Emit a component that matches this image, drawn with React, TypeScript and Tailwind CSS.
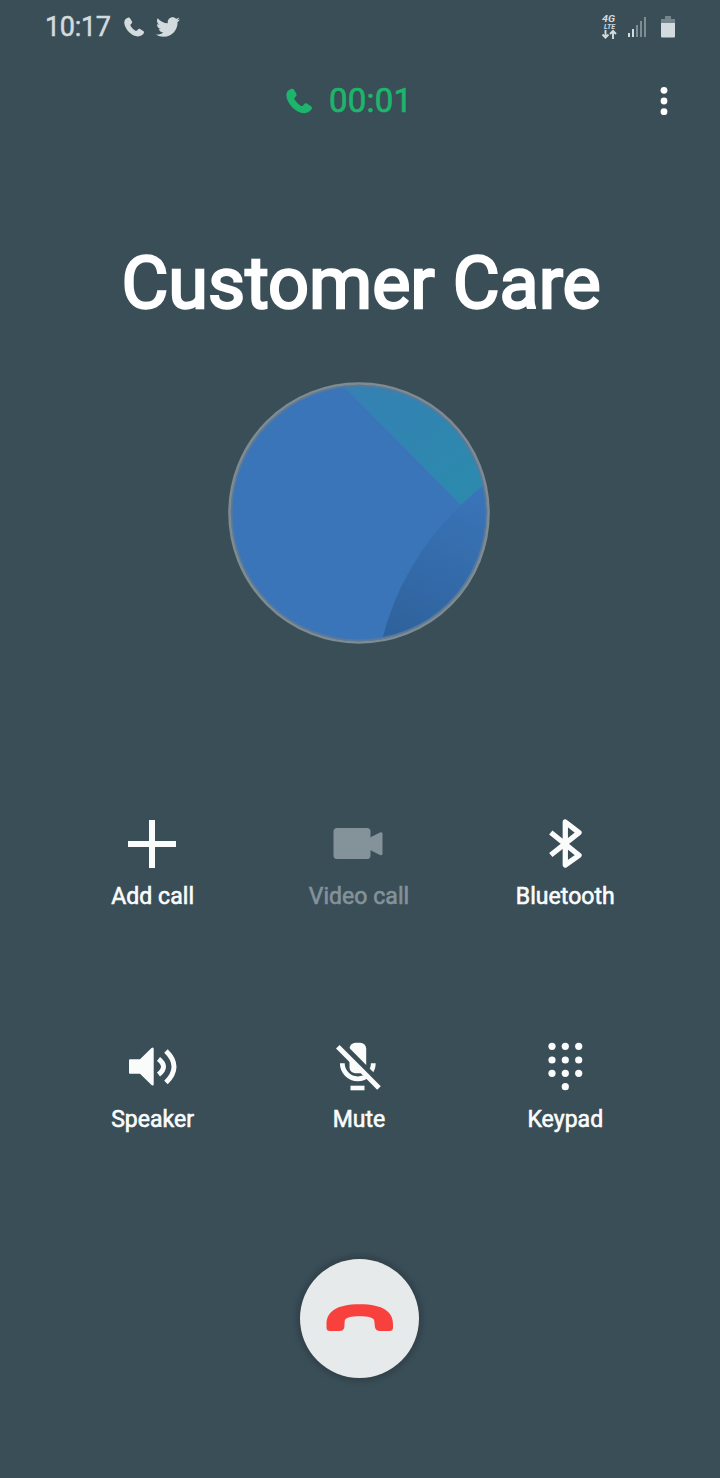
import type { ReactNode } from 'react';
import { FaTwitter } from 'react-icons/fa';

function Handset({ className }: { className?: string }) {
  return (
    <svg viewBox="0 0 26 26" fill="currentColor" className={className}>
      <path d="M5 1C2 2 .3 4 .3 7.5C1 16 10 25 18 25.3C22 25 25 22.5 25.7 21C26.2 20 26 19 25 18.3L21.3 15.8C20 15 18.8 15.2 18 16.2L17 17.5C16.3 18.2 15.3 18.2 14.3 17.5C12 16 10 13.8 8.7 11.7C8.2 10.7 8.3 9.8 9 9.2L10 8.3C10.8 7.5 10.8 6.5 10.2 5.5L8 1.8C7.3.6 6.2.4 5 1Z" />
    </svg>
  );
}

function StatusBar() {
  return (
    <div className="flex h-[54px] items-center pl-[45px] pr-[44px] text-[#d3dbde]">
      <span className="w-[66px] whitespace-nowrap text-[27px] leading-none tracking-[-0.3px] [-webkit-text-stroke:0.5px_currentColor]">10:17</span>
      <Handset className="ml-[13px] h-5 w-5" />
      <FaTwitter className="ml-3 h-6 w-6" />
      <div className="ml-auto flex items-center">
        {/* network type */}
        <svg width="18" height="26" viewBox="0 0 18 26" fill="currentColor" className="mr-[9px]">
          <text x="1" y="8" fontSize="9" fontWeight="700" fontStyle="italic" textLength="13" lengthAdjust="spacingAndGlyphs">4G</text>
          <text x="3" y="15" fontSize="6.5" fontWeight="700" fontStyle="italic" textLength="11" lengthAdjust="spacingAndGlyphs">LTE</text>
          <path d="M4.500 16v7M1.500 20.500l3 3.200 3-3.200M12 25v-7.500M9 20l3-3.200 3 3.200" fill="none" stroke="currentColor" strokeWidth="1.900" />
        </svg>
        <svg width="20" height="22" viewBox="0 0 20 22" fill="currentColor" className="mr-[12px]">
          <path d="M0 17h2v4H0zM4 13h2v8H4z" />
          <path d="M8 9h2v12H8zM12 5h2v16h-2zM16 1h2v20h-2z" opacity=".45" />
        </svg>
        <svg width="16" height="22" viewBox="0 0 16 22" fill="currentColor">
          <path d="M5 0h6v3h4v4H1V3h4z" opacity=".4" />
          <path d="M1 7h14v13.5a1 1 0 0 1-1 1H2a1 1 0 0 1-1-1z" />
        </svg>
      </div>
    </div>
  );
}

function Avatar() {
  return (
    <svg width="262" height="262" viewBox="0 0 262 262">
      <defs>
        <clipPath id="face"><circle cx="131" cy="131" r="128" /></clipPath>
        <linearGradient id="teal" x1="0" y1="0" x2="1" y2="1">
          <stop offset="0" stopColor="#3580b4" />
          <stop offset="1" stopColor="#2b8bac" />
        </linearGradient>
        <linearGradient id="navy" x1=".6" y1="0" x2=".3" y2="1">
          <stop offset="0" stopColor="#3a74b8" />
          <stop offset="1" stopColor="#2e629c" />
        </linearGradient>
      </defs>
      <g clipPath="url(#face)">
        <path d="M0 0h262v262H0z" fill="#3a75b9" />
        <path d="M111 0L233 123L262 99V0z" fill="url(#teal)" />
        <path d="M262 99Q246 110 233 123Q172 182 153 262H262z" fill="url(#navy)" />
      </g>
      <circle cx="131" cy="131" r="127.5" fill="none" stroke="#57799d" strokeWidth="2" />
      <circle cx="131" cy="131" r="129.5" fill="none" stroke="#7d8b92" strokeWidth="2.6" />
    </svg>
  );
}

function Action({ label, disabled, children }: { label: string; disabled?: boolean; children: ReactNode }) {
  return (
    <button
      disabled={disabled}
      className={`flex h-[223px] flex-col items-center ${disabled ? 'text-[#84929a]' : 'text-[#fafcfc]'}`}
    >
      <svg width="60" height="60" viewBox="0 0 60 60" fill="currentColor">{children}</svg>
      <span className="mt-[10px] pl-px text-[23px] leading-[26px] tracking-[0.05px] [-webkit-text-stroke:0.6px_currentColor]">{label}</span>
    </button>
  );
}

const keypadDots = [
  [17, 9.3], [30.3, 9.3], [43.7, 9.3],
  [17, 23], [30.3, 23], [43.7, 23],
  [17, 36.3], [30.3, 36.3], [43.7, 36.3],
  [30.3, 49.7],
];

export default function App() {
  return (
    <div className="h-[1478px] w-[720px] overflow-hidden bg-[#3a4e58] font-[Roboto,sans-serif]">
      <StatusBar />

      <header className="flex h-[94px] items-center pl-[286px] pr-[48px] text-[#1db56c]">
        <Handset className="h-[26px] w-[26px]" />
        <span className="mb-[2px] ml-[17px] text-[33px] leading-none tracking-[0.2px] [-webkit-text-stroke:0.7px_currentColor]">00:01</span>
        <button className="ml-auto text-white">
          <svg width="16" height="32" viewBox="0 0 16 32" fill="currentColor">
            <circle cx="8" cy="5.3" r="3.4" />
            <circle cx="8" cy="16" r="3.4" />
            <circle cx="8" cy="26.7" r="3.4" />
          </svg>
        </button>
      </header>

      <h1 className="mt-[93px] h-[86px] whitespace-nowrap pl-[2px] text-center text-[72px] leading-[86px] text-white [-webkit-text-stroke:2.4px_currentColor]">
        Customer Care
      </h1>

      <div className="mt-[55px] flex pl-[228px]">
        <Avatar />
      </div>

      <div className="ml-[49px] mt-[170px] grid w-[619px] grid-cols-3">
        <Action label="Add call">
          <path d="M27 6h6v21h21v6H33v21h-6V33H6v-6h21z" />
        </Action>
        <Action label="Video call" disabled>
          <rect x="5.5" y="14" width="37" height="31" rx="3.5" />
          <path d="M41 24L52 18.5Q54.5 17.500 54.500 20V39.500Q54.500 42 52 41L41 35.500z" />
        </Action>
        <Action label="Bluetooth">
          <path
            d="M15.800 18.500L44 41.300L30.300 51V8L44 18.700L15.800 41"
            fill="none"
            stroke="currentColor"
            strokeWidth="5.300"
            strokeLinejoin="round"
          />
        </Action>
        <Action label="Speaker">
          <path d="M8 22.300H18L29.500 11Q31.700 9.500 31.700 12V47Q31.700 49.500 29.500 48L18 36.700H8Q7 36.700 7 35.700V23.300Q7 22.300 8 22.300z" />
          <path d="M36.500 22Q46.500 29.700 36.500 37.500M44 14Q60 29.700 44 45.500" fill="none" stroke="currentColor" strokeWidth="5" />
        </Action>
        <Action label="Mute">
          <rect x="21.500" y="5.700" width="16.700" height="30.600" rx="6" />
          <path d="M14.300 26.300a15.500 15.500 0 0 0 31 0" fill="none" stroke="currentColor" strokeWidth="4.800" />
          <path d="M22.500 48.700h14v4.600h-14z" />
          <path d="M12 5.500L54 48" fill="none" stroke="#3a4e58" strokeWidth="5.500" />
          <path d="M9.800 9.700L51 51" fill="none" stroke="currentColor" strokeWidth="5" />
        </Action>
        <Action label="Keypad">
          {keypadDots.map(([x, y]) => <circle key={`${x}-${y}`} cx={x} cy={y} r="3.6" />)}
        </Action>
      </div>

      <button className="ml-[300px] mt-[-1px] block h-[119px] w-[119px] rounded-full bg-[#e6eaeb] shadow-[0_0_4px_4px_#32434c]">
        <svg width="119" height="119" viewBox="0 0 119 119" fill="#f8403c">
          <path d="M26.500 66C26 53 36 45.300 59.700 45.300S93.500 53 93 66V68.500Q93 72 89.500 72H80Q76 72 75 68.500L74.300 62C74 58.500 68 57.300 59.700 57.300S45 58.500 44.700 62L44.300 68.500Q43.500 72 39.500 72H30Q26.500 72 26.500 68.500z" />
        </svg>
      </button>
    </div>
  );
}
